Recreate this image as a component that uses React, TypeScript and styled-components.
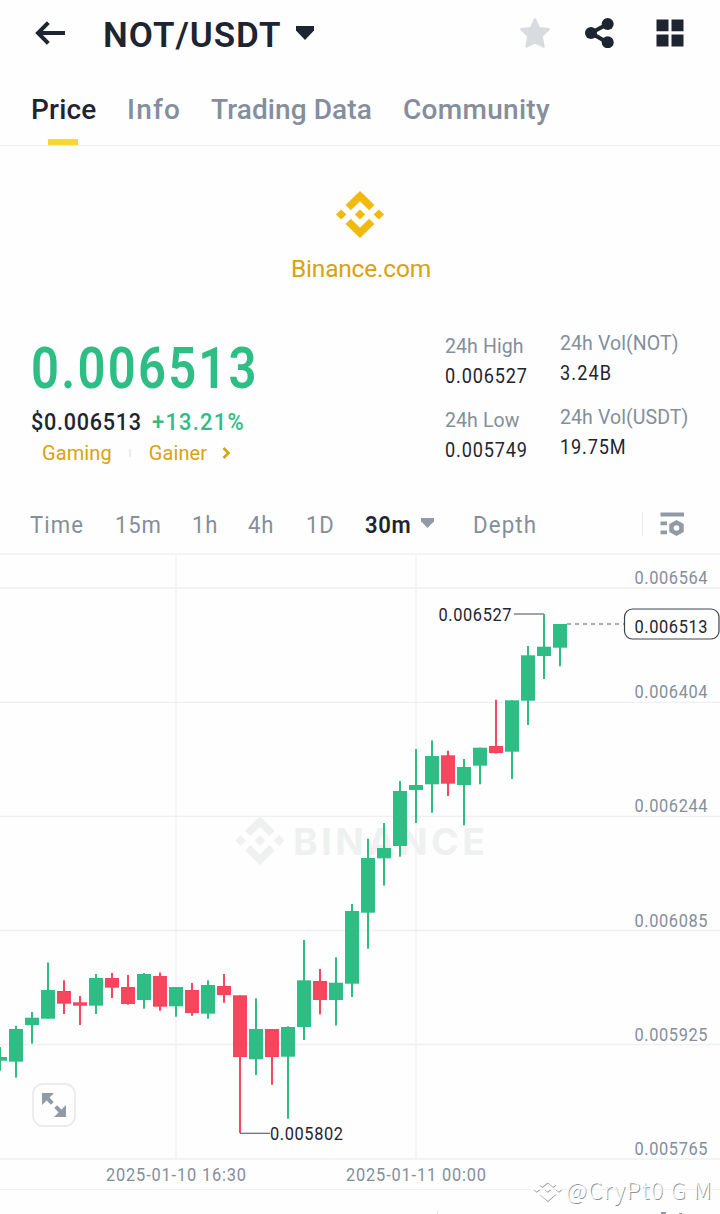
import React from "react";
import styled, { createGlobalStyle } from "styled-components";

const GREEN = "#2ebd85";
const RED = "#f6465d";
const INK = "#1e2530";
const GRAY = "#848e9c";
const GOLD = "#d9a20f";
const LINE = "#eef0f1";

const GlobalStyle = createGlobalStyle`
  * { box-sizing: border-box; }
  body { margin: 0; background: #fefefe; }
`;

const Screen = styled.main`
  position: relative;
  width: 720px;
  height: 1214px;
  overflow: hidden;
  background: #fefefe;
  color: ${INK};
  font-family: Roboto, "Liberation Sans", sans-serif;
  white-space: nowrap;
`;

const Header = styled.header`
  display: flex;
  align-items: center;
  height: 70px;
  padding: 0 36px 0 35px;
`;

const Icon = styled.svg<{ $ml?: number; $lift?: number }>`
  display: block;
  flex: none;
  margin-left: ${(p) => p.$ml ?? 0}px;
  margin-bottom: ${(p) => p.$lift ?? 0}px;
`;

const Pair = styled.h1`
  margin: 0 0 0 38px;
  padding-top: 2px;
  width: 193px;
  font-size: 35px;
  font-weight: 560;
  line-height: 68px;
  letter-spacing: 1px;
`;

const Actions = styled.div`
  display: flex;
  align-items: center;
  margin-left: auto;
`;

const Tabs = styled.nav`
  display: grid;
  grid-template-columns: 96px 84px 192px auto;
  height: 76px;
  padding: 25px 0 0 31px;
  border-bottom: 1px solid #ebedee;
`;

const Tab = styled.div<{ $active?: boolean; $ls?: number }>`
  display: flex;
  flex-direction: column;
  justify-content: space-between;
  font-size: 28px;
  font-weight: 500;
  line-height: 29px;
  letter-spacing: ${(p) => p.$ls ?? 0.5}px;
  color: ${(p) => (p.$active ? INK : GRAY)};
`;

const TabMark = styled.span`
  width: 30px;
  height: 6px;
  margin-left: 17px;
  background: #fcd535;
`;

const Brand = styled.section`
  display: flex;
  flex-direction: column;
  align-items: center;
  gap: 16px;
  height: 138px;
  padding-top: 45px;
`;

const BrandName = styled.div`
  padding-left: 2px;
  font-size: 24.5px;
  line-height: 30px;
  letter-spacing: -0.2px;
  color: ${GOLD};
`;

const Summary = styled.section`
  display: grid;
  grid-template-columns: 414px 115px auto;
  align-items: start;
  height: 212px;
  padding: 48px 0 0 31px;
`;

const PriceBlock = styled.div`
  padding-top: 7px;
`;

/* Figures are set condensed with open tracking. */
const Figures = styled.span<{ $sx?: number; $ls?: number }>`
  display: inline-block;
  transform: scaleX(${(p) => p.$sx ?? 0.93});
  transform-origin: left center;
  letter-spacing: ${(p) => p.$ls ?? 0.9}px;
`;

const LastPrice = styled.div`
  font-size: 57px;
  font-weight: 600;
  line-height: 60px;
  color: ${GREEN};
`;

const FiatRow = styled.div`
  display: grid;
  grid-template-columns: 121px auto;
  margin-top: 8px;
  font-size: 24px;
  font-weight: 500;
  line-height: 30px;
`;

const Change = styled.span`
  color: ${GREEN};
`;

const Tags = styled.div`
  display: flex;
  align-items: center;
  margin-top: 3px;
  padding-left: 11px;
  font-size: 20px;
  line-height: 26px;
  letter-spacing: 0.1px;
  color: ${GOLD};
`;

const TagRule = styled.span`
  width: 2px;
  height: 8px;
  margin: 0 17.5px;
  background: #eaecef;
`;

const StatColumn = styled.dl<{ $top: number }>`
  display: grid;
  gap: 15px;
  margin: ${(p) => p.$top}px 0 0;
`;

const StatLabel = styled.dt`
  font-size: 19.5px;
  line-height: 29px;
  letter-spacing: 0.1px;
  color: ${GRAY};
`;

const StatValue = styled.dd`
  margin: 1px 0 0;
  font-size: 19.5px;
  line-height: 29px;
`;

const Intervals = styled.nav`
  display: grid;
  grid-template-columns: 85px 77px 56px 58px 59px 108px 169px auto;
  align-items: center;
  height: 57px;
  padding-left: 30px;
`;

const Interval = styled.div<{ $active?: boolean }>`
  display: flex;
  align-items: center;
  gap: 6px;
  font-size: 24px;
  font-weight: ${(p) => (p.$active ? 600 : 400)};
  color: ${(p) => (p.$active ? INK : GRAY)};
`;

const ChartTools = styled.div`
  display: flex;
  align-items: center;
  height: 24px;
  margin-bottom: 2px;
  padding-left: 17px;
  border-left: 1px solid #e6e8ea;
`;

const Chart = styled.svg`
  display: block;
`;

const Stamp = styled.div`
  position: absolute;
  left: 533px;
  top: 1173px;
  display: flex;
  align-items: center;
  gap: 3px;
  height: 32px;
  font-family: "Noto Sans CJK SC", "Noto Sans", sans-serif;
  font-size: 23px;
  font-weight: 300;
  letter-spacing: 1.15px;
  color: #fefefe;
  text-shadow: 0.8px 0.8px 0 #929292;
`;

const DIAMOND =
  "M12 0 19.2 7.2 16.6 9.8 12 5.2 7.4 9.8 4.8 7.2ZM2.6 9.4 5.2 12 2.6 14.6 0 12ZM12 9.4 14.6 12 12 14.6 9.4 12ZM21.4 9.4 24 12 21.4 14.6 18.8 12ZM7.4 14.2 12 18.8 16.6 14.2 19.2 16.8 12 24 4.8 16.8Z";

type Candle = [up: 0 | 1, top: number, bottom: number, high: number, low: number];

const candles: Candle[] = [
  [1, 1057, 1060.7, 1047, 1070.7],
  [1, 1029, 1061.7, 1025.7, 1077.7],
  [1, 1017.7, 1025, 1012, 1043.7],
  [1, 990, 1018.7, 962.5, 1018.7],
  [0, 991, 1003.7, 980.3, 1014],
  [0, 1002.3, 1005.7, 996, 1025],
  [1, 978, 1005.7, 974, 1014],
  [0, 978, 987.7, 973, 998],
  [0, 987, 1004, 975, 1004.7],
  [1, 974, 1000, 973, 1008.7],
  [0, 976, 1006.7, 972.5, 1010.7],
  [1, 987, 1006.3, 987, 1016.7],
  [0, 990, 1013, 983, 1015.7],
  [1, 985, 1013.7, 980.3, 1018.7],
  [0, 986, 995, 974, 1002.7],
  [0, 995.3, 1057, 995.3, 1133],
  [1, 1029, 1059.3, 998.3, 1075],
  [0, 1029, 1057, 1029, 1084.7],
  [1, 1027, 1056.7, 1026.3, 1118.7],
  [1, 980.3, 1027, 940, 1040],
  [0, 981, 1000, 969, 1014.3],
  [1, 982.7, 1000, 957.3, 1025.5],
  [1, 911, 983.7, 904, 997],
  [1, 858, 912.7, 838.7, 948.7],
  [1, 848, 858.3, 823, 885.7],
  [1, 791, 846, 781, 856.7],
  [1, 785, 790, 749, 823],
  [1, 756, 784.3, 740.3, 812.7],
  [0, 755.3, 783.7, 750.7, 796],
  [1, 767, 785, 759, 825.3],
  [1, 747.7, 765.7, 747.7, 784.3],
  [0, 746, 753, 699.7, 753.7],
  [1, 700.3, 751.7, 700.3, 779],
  [1, 655.3, 700.7, 646, 725],
  [1, 646.7, 656, 614, 679],
  [1, 624, 647.7, 624, 666.3],
];

const gridRows = [588, 702.3, 816.3, 930.5, 1044.5];
const axis: [string, number][] = [
  ["0.006564", 584],
  ["0.006404", 698],
  ["0.006244", 812],
  ["0.006085", 927],
  ["0.005925", 1041],
  ["0.005765", 1155],
];

function Caret({ w, h, lift, color }: { w: number; h: number; lift: number; color: string }) {
  return (
    <Icon width={w} height={h} viewBox="0 0 18 14" preserveAspectRatio="none" $lift={lift}>
      <path d="M0 0H18V4.500L9 14 0 4.500Z" fill={color} />
    </Icon>
  );
}

function Label({ x, y, w = 73, children }: { x: number; y: number; w?: number; children: string }) {
  const squeeze = 0.91;
  return (
    <text transform={`translate(${x} ${y}) scale(${squeeze} 1)`} textLength={w / squeeze}>
      {children}
    </text>
  );
}

function PriceChart() {
  return (
    <Chart width="720" height="661" viewBox="0 553 720 661" fontFamily="Roboto, sans-serif" fontSize="18">
      <g stroke={LINE} fill="none">
        <path d="M0 554H720M176 554V1159M416 554V1159" strokeWidth="2" stroke="#f3f4f5" />
        {gridRows.map((y) => (
          <path key={y} d={`M0 ${y}H720`} strokeWidth="1.300" />
        ))}
        <path d="M0 1159H720" strokeWidth="1.400" />
        <path d="M0 1189.500H720" strokeWidth="1" />
        <path d="M437.500 1211V1214" strokeWidth="1" stroke="#dfe2e5" />
      </g>
      <g fill="#eff1f1">
        <path d={DIAMOND} transform="translate(235.300 816) scale(2.050)" />
        <text x="293" y="854.500" fontFamily="Inter, sans-serif" fontSize="37.500" fontWeight="700" textLength="192">
          BINANCE
        </text>
      </g>
      {candles.map(([up, top, bottom, high, low], i) => (
        <g key={i} fill={up ? GREEN : RED}>
          <rect x={i * 16 - 1} y={high} width="2" height={low - high} />
          <rect x={i * 16 - 7} y={top} width="14" height={bottom - top} />
        </g>
      ))}
      <g fill={GRAY}>
        {axis.map(([label, y]) => (
          <Label key={label} x={634.5} y={y}>
            {label}
          </Label>
        ))}
        <Label x={106} y={1181} w={140}>
          2025-01-10 16:30
        </Label>
        <Label x={346} y={1181} w={140}>
          2025-01-11 00:00
        </Label>
      </g>
      <g fill="none" stroke="#8f949b" strokeWidth="1.700">
        <path d="M514 614H544" />
        <path d="M240 1133.300H270" stroke="#5f6671" strokeWidth="1.200" />
        <path d="M567 624H624" strokeDasharray="4 4" />
      </g>
      <rect x="624.500" y="609" width="94.500" height="30" rx="8" fill="#fefefe" stroke="#3e444e" strokeWidth="1.200" />
      <g fill={INK}>
        <Label x={438.5} y={621}>
          0.006527
        </Label>
        <Label x={634.5} y={633}>
          0.006513
        </Label>
        <Label x={270} y={1140}>
          0.005802
        </Label>
      </g>
      <rect x="33" y="1084" width="42" height="42" rx="10" fill="#fefefe" stroke="#e9ebed" strokeWidth="1.800" />
      <g fill="#929aa5" stroke="#929aa5">
        <path d="M42 1093H54L42 1105ZM66 1117H54L66 1105Z" stroke="none" />
        <path d="M46 1097 52.300 1103.300M62 1113 55.700 1106.700" strokeWidth="4" />
      </g>
      <g fill="#929aa5">
        <rect x="661" y="1212" width="5" height="2" />
        <rect x="679" y="1213" width="3" height="1" />
      </g>
    </Chart>
  );
}

export default function App() {
  return (
    <Screen>
      <GlobalStyle />
      <Header>
        <Icon width="30" height="24" viewBox="0 0 30 24" $lift={4}>
          <path d="M30 12H3M13.300 1.600 3 12 13.300 22.400" fill="none" stroke={INK} strokeWidth="4" />
        </Icon>
        <Pair>NOT/USDT</Pair>
        <Caret w={18} h={14} lift={4} color={INK} />
        <Actions>
          <Icon width="30" height="30" viewBox="0 0 30 30" $lift={4}>
            <path
              d="M15 1.500 19 10.300 28.500 11.300 21.500 18 23.500 28.500 15 24.200 6.500 28.500 8.500 18 1.500 11.300 11 10.300Z"
              fill="#d8dce1"
              stroke="#d8dce1"
              strokeWidth="2.500"
              strokeLinejoin="round"
            />
          </Icon>
          <Icon width="30" height="30" viewBox="0 0 30 30" $ml={35} $lift={4}>
            <path d="M22.500 6 6 15 22.500 24.500" fill="none" stroke={INK} strokeWidth="4" />
            <g fill={INK}>
              <circle cx="22.700" cy="6" r="6" />
              <circle cx="6" cy="15" r="6" />
              <circle cx="22.700" cy="24.200" r="6" />
            </g>
          </Icon>
          <Icon width="28" height="28" viewBox="0 0 28 28" $ml={41} $lift={4}>
            <path d="M0.500 0.500H12.500V12.300H0.500ZM15.500 0.500H27.500V12.300H15.500ZM0.500 15.500H12.500V27.500H0.500ZM15.500 15.500H27.500V27.500H15.500Z" fill={INK} />
          </Icon>
        </Actions>
      </Header>
      <Tabs>
        <Tab $active $ls={0.2}>
          Price
          <TabMark />
        </Tab>
        <Tab $ls={1.2}>Info</Tab>
        <Tab $ls={0.1}>Trading Data</Tab>
        <Tab $ls={0.3}>Community</Tab>
      </Tabs>
      <Brand>
        <Icon width="48" height="47" viewBox="0 0 24 24" preserveAspectRatio="none">
          <path d={DIAMOND} fill="#f0b90b" />
        </Icon>
        <BrandName>Binance.com</BrandName>
      </Brand>
      <Summary>
        <PriceBlock>
          <LastPrice>
            <Figures $sx={0.86} $ls={2.6}>
              0.006513
            </Figures>
          </LastPrice>
          <FiatRow>
            <Figures $sx={0.9} $ls={0.8}>
              $0.006513
            </Figures>
            <Change>
              <Figures $sx={0.91} $ls={1.4}>
                +13.21%
              </Figures>
            </Change>
          </FiatRow>
          <Tags>
            Gaming
            <TagRule />
            Gainer
            <Icon width="9" height="12" viewBox="0 0 9 12" $ml={15}>
              <path d="M1.500 1 6.500 6 1.500 11" fill="none" stroke={GOLD} strokeWidth="2.600" />
            </Icon>
          </Tags>
        </PriceBlock>
        <StatColumn $top={0}>
          <div>
            <StatLabel>24h High</StatLabel>
            <StatValue>
              <Figures>0.006527</Figures>
            </StatValue>
          </div>
          <div>
            <StatLabel>24h Low</StatLabel>
            <StatValue>
              <Figures>0.005749</Figures>
            </StatValue>
          </div>
        </StatColumn>
        <StatColumn $top={-3}>
          <div>
            <StatLabel>24h Vol(NOT)</StatLabel>
            <StatValue>
              <Figures $ls={1.2}>3.24B</Figures>
            </StatValue>
          </div>
          <div>
            <StatLabel>24h Vol(USDT)</StatLabel>
            <StatValue>
              <Figures>19.75M</Figures>
            </StatValue>
          </div>
        </StatColumn>
      </Summary>
      <Intervals>
        <Interval>
          <Figures $sx={0.92} $ls={1.2}>
            Time
          </Figures>
        </Interval>
        <Interval>
          <Figures $sx={0.92}>15m</Figures>
        </Interval>
        <Interval>
          <Figures $sx={0.92}>1h</Figures>
        </Interval>
        <Interval>
          <Figures $sx={0.92}>4h</Figures>
        </Interval>
        <Interval>
          <Figures $sx={0.92}>1D</Figures>
        </Interval>
        <Interval $active>
          <Figures $sx={0.92} $ls={0.7}>
            30m
          </Figures>
          <Caret w={13} h={10} lift={4} color="#929aa5" />
        </Interval>
        <Interval>
          <Figures $sx={0.93} $ls={1.2}>
            Depth
          </Figures>
        </Interval>
        <ChartTools>
          <Icon width="25" height="24" viewBox="0 0 25 24">
            <g fill="#929aa5">
              <path d="M0.500 0.500H24V4.500H0.500ZM0.500 9.500H7V13.300H0.500ZM0.500 18.500H7V22.300H0.500Z" />
              <path fillRule="evenodd" d="M16.500 8 23.700 12V20L16.500 24 9.300 20V12ZM16.500 13.200A2.800 2.800 0 1 0 16.500 18.800 2.800 2.800 0 0 0 16.500 13.200Z" />
            </g>
          </Icon>
        </ChartTools>
      </Intervals>
      <PriceChart />
      <Stamp>
        <Icon width="30" height="25" viewBox="-0.500 -0.500 25.500 25.500" preserveAspectRatio="none">
          <path d={DIAMOND} transform="translate(0.200 0.900)" fill="#9a9a9a" />
          <path d={DIAMOND} fill="#fefefe" />
        </Icon>
        @CryPt0 G M
      </Stamp>
    </Screen>
  );
}
